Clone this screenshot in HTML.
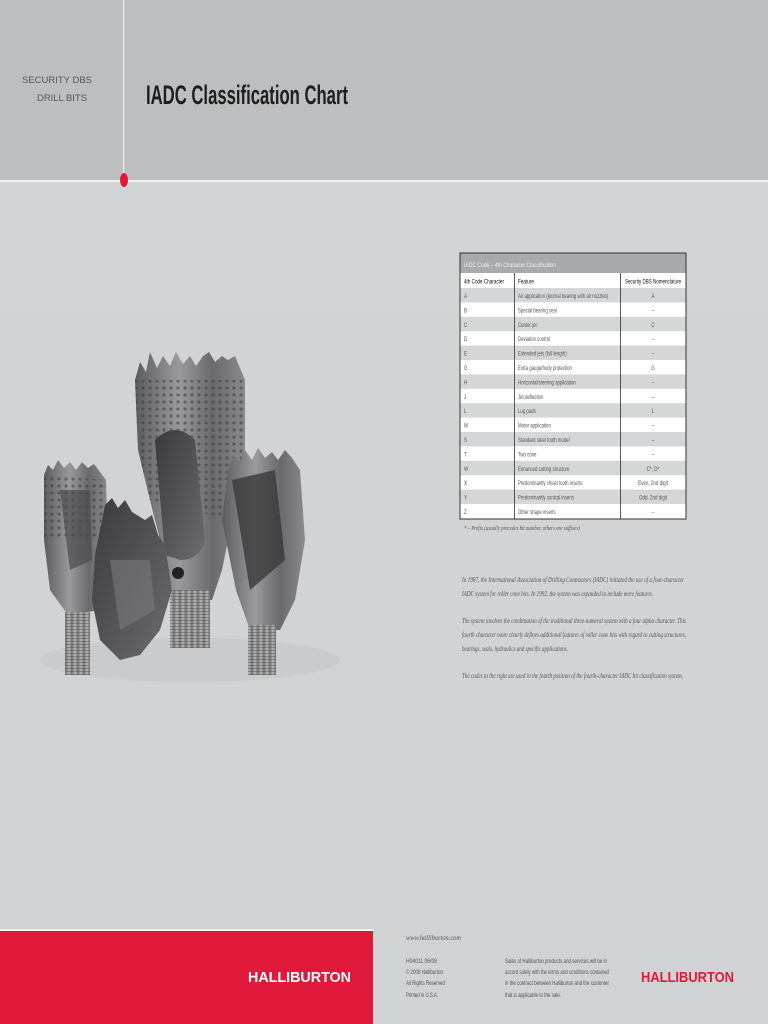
<!DOCTYPE html>
<html><head><meta charset="utf-8"><style>
html,body{margin:0;padding:0;width:768px;height:1024px;overflow:hidden;background:#d3d5d7}
svg{display:block}
</style></head><body>
<svg width="768" height="1024" viewBox="0 0 768 1024" xmlns="http://www.w3.org/2000/svg">
<defs>
<linearGradient id="bg" x1="0" y1="0" x2="0" y2="1"><stop offset="0" stop-color="#d2d4d6"/><stop offset="1" stop-color="#d0d2d4"/></linearGradient>
<linearGradient id="metal" x1="0" y1="0" x2="1" y2="0"><stop offset="0" stop-color="#5c5c5e"/><stop offset="0.4" stop-color="#9a9a9c"/><stop offset="0.7" stop-color="#6a6a6c"/><stop offset="1" stop-color="#8a8a8c"/></linearGradient>
<linearGradient id="dark" x1="0" y1="0" x2="1" y2="1"><stop offset="0" stop-color="#3a3a3c"/><stop offset="1" stop-color="#6c6c6e"/></linearGradient>
<linearGradient id="shank" x1="0" y1="0" x2="1" y2="0"><stop offset="0" stop-color="#777"/><stop offset="0.5" stop-color="#b8b8b8"/><stop offset="1" stop-color="#707070"/></linearGradient>
<pattern id="thread" width="6" height="3" patternUnits="userSpaceOnUse"><rect width="6" height="3" fill="url(#shank)"/><rect y="2" width="6" height="1" fill="#555" opacity=".5"/></pattern>
<pattern id="dots" width="7" height="7" patternUnits="userSpaceOnUse"><rect width="7" height="7" fill="none"/><circle cx="3" cy="3" r="1.6" fill="#3a3a3a" opacity=".55"/></pattern>
</defs>
<rect width="768" height="1024" fill="url(#bg)"/>
<!-- header -->
<rect width="768" height="180" fill="#bdbebf"/>
<rect y="180" width="768" height="2" fill="#f2f2f2"/>
<rect x="123" y="0" width="1.2" height="180" fill="#eeeeee"/>
<ellipse cx="124" cy="180" rx="4" ry="7" fill="#e0193a"/>
<text x="57" y="83" font-family="Liberation Sans, sans-serif" font-size="9.5" fill="#555" text-anchor="middle" textLength="70" lengthAdjust="spacingAndGlyphs">SECURITY DBS</text>
<text x="62" y="101" font-family="Liberation Sans, sans-serif" font-size="9.5" fill="#555" text-anchor="middle" textLength="50" lengthAdjust="spacingAndGlyphs">DRILL BITS</text>
<text x="146" y="104" font-family="Liberation Sans, sans-serif" font-weight="bold" font-size="27" fill="#1e1e1e" textLength="202" lengthAdjust="spacingAndGlyphs">IADC Classification Chart</text>

<!-- drill bits -->
<g>
<ellipse cx="190" cy="660" rx="150" ry="22" fill="#c4c6c8" opacity=".6"/>
<path d="M135 380 L140 362 L146 372 L150 352 L157 368 L163 356 L170 366 L176 352 L183 364 L190 356 L196 366 L203 356 L209 352 L215 362 L222 356 L228 360 L235 356 L240 368 L245 380 L245 470 L232 520 L222 570 L212 600 L175 600 L165 560 L150 500 L138 450 Z" fill="url(#metal)"/>
<path d="M135 380 L245 380 L245 470 L232 520 L150 500 L138 450 Z" fill="url(#dots)"/>
<path d="M155 440 Q175 420 195 440 L205 540 Q200 560 180 560 L165 555 Z" fill="url(#dark)"/>
<rect x="170" y="590" width="40" height="58" fill="url(#thread)"/>
<circle cx="178" cy="573" r="6" fill="#222"/>
<path d="M44 475 L48 465 L53 470 L58 460 L64 468 L70 462 L76 470 L82 462 L88 468 L94 464 L100 472 L106 480 L108 560 L100 610 L68 615 L50 590 L44 540 Z" fill="url(#metal)"/>
<path d="M44 475 L106 480 L108 540 L44 540 Z" fill="url(#dots)"/>
<path d="M60 490 L90 490 L92 560 L70 570 Z" fill="#4a4a4c" opacity=".7"/>
<rect x="65" y="612" width="25" height="63" fill="url(#thread)"/>
<path d="M105 505 L112 498 L118 508 L125 500 L132 512 L145 520 L152 515 L158 535 L165 545 L172 590 L160 630 L140 655 L120 660 L100 640 L92 600 L95 555 Z" fill="url(#dark)"/>
<path d="M110 560 L150 560 L155 610 L120 630 Z" fill="#7a7a7c" opacity=".6"/>
<path d="M228 470 L234 455 L240 462 L245 450 L252 460 L258 448 L265 458 L272 452 L278 460 L285 450 L292 458 L300 470 L305 540 L295 600 L280 630 L250 630 L236 590 L222 520 Z" fill="url(#metal)"/>
<path d="M232 480 L275 470 L285 560 L250 590 Z" fill="#38383a" opacity=".8"/>
<rect x="248" y="625" width="28" height="50" fill="url(#thread)"/>
</g>

<!-- table -->
<g font-family="Liberation Sans, sans-serif" font-size="6" fill="#444">
<rect x="460" y="253" width="226" height="266" fill="#fff" stroke="#333" stroke-width="1"/>
<rect x="460.5" y="253.5" width="225" height="19.5" fill="#a9aaac"/>
<text x="464" y="267" fill="#eee" font-size="6.5" textLength="92" lengthAdjust="spacingAndGlyphs">IADC Code – 4th Character Classification</text>
<rect x="460.5" y="273" width="225" height="15" fill="#fff"/>
<text x="464" y="283.5" fill="#111" textLength="40" lengthAdjust="spacingAndGlyphs">4th Code Character</text>
<text x="518" y="283.5" fill="#111" textLength="16" lengthAdjust="spacingAndGlyphs">Feature</text>
<text x="653" y="283.5" fill="#111" text-anchor="middle" textLength="56" lengthAdjust="spacingAndGlyphs">Security DBS Nomenclature</text>
<g fill="#d5d6d8">
<rect x="460.5" y="288" width="225" height="14.4"/>
<rect x="460.5" y="316.8" width="225" height="14.4"/>
<rect x="460.5" y="345.6" width="225" height="14.4"/>
<rect x="460.5" y="374.4" width="225" height="14.4"/>
<rect x="460.5" y="403.2" width="225" height="14.4"/>
<rect x="460.5" y="432" width="225" height="14.4"/>
<rect x="460.5" y="460.8" width="225" height="14.4"/>
<rect x="460.5" y="489.6" width="225" height="14.4"/>
</g>
<rect x="514" y="273" width="0.8" height="246" fill="#333"/>
<rect x="620" y="273" width="0.8" height="246" fill="#333"/>
<g fill="#555" transform="translate(464 0) scale(0.75 1)">
<text x="0" y="298">A</text><text x="0" y="312.4">B</text><text x="0" y="326.8">C</text><text x="0" y="341.2">D</text>
<text x="0" y="355.6">E</text><text x="0" y="370">G</text><text x="0" y="384.4">H</text><text x="0" y="398.8">J</text>
<text x="0" y="413.2">L</text><text x="0" y="427.6">M</text><text x="0" y="442">S</text><text x="0" y="456.4">T</text>
<text x="0" y="470.8">W</text><text x="0" y="485.2">X</text><text x="0" y="499.6">Y</text><text x="0" y="514">Z</text>
</g>
<g fill="#555" transform="translate(518 0) scale(0.72 1)">
<text x="0" y="298">Air application (journal bearing with air nozzles)</text>
<text x="0" y="312.4">Special bearing seal</text>
<text x="0" y="326.8">Center jet</text>
<text x="0" y="341.2">Deviation control</text>
<text x="0" y="355.6">Extended jets (full length)</text>
<text x="0" y="370">Extra gauge/body protection</text>
<text x="0" y="384.4">Horizontal/steering application</text>
<text x="0" y="398.8">Jet deflection</text>
<text x="0" y="413.2">Lug pads</text>
<text x="0" y="427.6">Motor application</text>
<text x="0" y="442">Standard steel tooth model</text>
<text x="0" y="456.4">Two cone</text>
<text x="0" y="470.8">Enhanced cutting structure</text>
<text x="0" y="485.2">Predominantly chisel tooth inserts</text>
<text x="0" y="499.6">Predominantly conical inserts</text>
<text x="0" y="514">Other shape inserts</text>
</g>
<g fill="#555" transform="translate(653 0) scale(0.75 1)" text-anchor="middle">
<text x="0" y="298">A</text><text x="0" y="312.4">–</text><text x="0" y="326.8">C</text><text x="0" y="341.2">–</text>
<text x="0" y="355.6">–</text><text x="0" y="370">G</text><text x="0" y="384.4">–</text><text x="0" y="398.8">–</text>
<text x="0" y="413.2">L</text><text x="0" y="427.6">–</text><text x="0" y="442">–</text><text x="0" y="456.4">–</text>
<text x="0" y="470.8">C*, D*</text><text x="0" y="485.2">Even, 2nd digit</text><text x="0" y="499.6">Odd, 2nd digit</text><text x="0" y="514">–</text>
</g>
</g>
<text x="464" y="530" font-family="Liberation Serif, serif" font-style="italic" font-size="6.5" fill="#555" textLength="116" lengthAdjust="spacingAndGlyphs">* – Prefix (usually precedes bit number, others are suffixes)</text>

<!-- paragraphs -->
<g font-family="Liberation Serif, serif" font-style="italic" font-size="7" fill="#555">
<text x="462" y="582" textLength="222" lengthAdjust="spacingAndGlyphs">In 1987, the International Association of Drilling Contractors (IADC) initiated the use of a four-character</text>
<text x="462" y="596" textLength="191" lengthAdjust="spacingAndGlyphs">IADC system for roller cone bits. In 1992, the system was expanded to include more features.</text>
<text x="462" y="623" textLength="224" lengthAdjust="spacingAndGlyphs">The system involves the combination of the traditional three-numeral system with a four alpha character. This</text>
<text x="462" y="637" textLength="224" lengthAdjust="spacingAndGlyphs">fourth character more clearly defines additional features of roller cone bits with regard to cutting structures,</text>
<text x="462" y="651" textLength="106" lengthAdjust="spacingAndGlyphs">bearings, seals, hydraulics and specific applications.</text>
<text x="462" y="678" textLength="221" lengthAdjust="spacingAndGlyphs">The codes to the right are used in the fourth position of the fourth-character IADC bit classification system.</text>
</g>

<!-- footer -->
<rect x="0" y="929" width="373" height="2" fill="#f4f4f4"/>
<rect x="0" y="931" width="373" height="93" fill="#e0193a"/>
<text x="248" y="982" font-family="Liberation Sans, sans-serif" font-weight="bold" font-size="15" fill="#fff" textLength="103" lengthAdjust="spacingAndGlyphs">HALLIBURTON</text>
<text x="641" y="982" font-family="Liberation Sans, sans-serif" font-weight="bold" font-size="15" fill="#e0193a" textLength="93" lengthAdjust="spacingAndGlyphs">HALLIBURTON</text>
<text x="406" y="940" font-family="Liberation Serif, serif" font-style="italic" font-size="7" fill="#555" textLength="55" lengthAdjust="spacingAndGlyphs">www.halliburton.com</text>
<g font-family="Liberation Sans, sans-serif" font-size="6" fill="#555">
<text x="406" y="963" textLength="31" lengthAdjust="spacingAndGlyphs">H04011   06/08</text>
<text x="406" y="974" textLength="37" lengthAdjust="spacingAndGlyphs">© 2008 Halliburton</text>
<text x="406" y="985" textLength="39" lengthAdjust="spacingAndGlyphs">All Rights Reserved</text>
<text x="406" y="997" textLength="32" lengthAdjust="spacingAndGlyphs">Printed in U.S.A.</text>
<text x="505" y="963" textLength="102" lengthAdjust="spacingAndGlyphs">Sales of Halliburton products and services will be in</text>
<text x="505" y="974" textLength="104" lengthAdjust="spacingAndGlyphs">accord solely with the terms and conditions contained</text>
<text x="505" y="985" textLength="104" lengthAdjust="spacingAndGlyphs">in the contract between Halliburton and the customer</text>
<text x="505" y="997" textLength="56" lengthAdjust="spacingAndGlyphs">that is applicable to the sale.</text>
</g>
</svg>
</body></html>
